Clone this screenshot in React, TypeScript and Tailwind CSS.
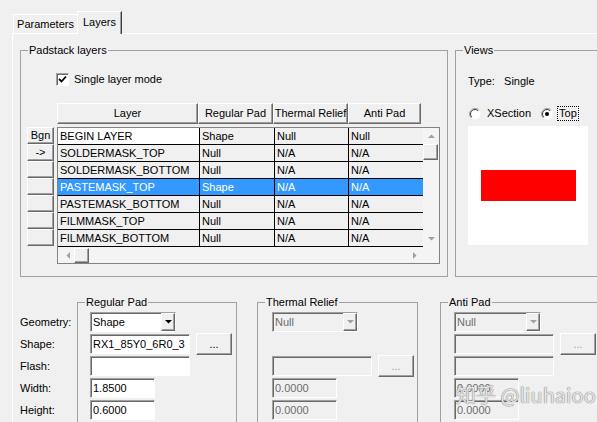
import type { ReactNode } from "react"

const raised =
  "border border-t-white border-l-white border-r-[#696969] border-b-[#696969] shadow-[inset_-1px_-1px_0_#a0a0a0]"
const sunken =
  "border border-t-[#a0a0a0] border-l-[#a0a0a0] border-r-white border-b-white shadow-[inset_1px_1px_0_#696969]"

const ROWS = [
  ["BEGIN LAYER", "Shape", "Null", "Null"],
  ["SOLDERMASK_TOP", "Null", "N/A", "N/A"],
  ["SOLDERMASK_BOTTOM", "Null", "N/A", "N/A"],
  ["PASTEMASK_TOP", "Shape", "N/A", "N/A"],
  ["PASTEMASK_BOTTOM", "Null", "N/A", "N/A"],
  ["FILMMASK_TOP", "Null", "N/A", "N/A"],
  ["FILMMASK_BOTTOM", "Null", "N/A", "N/A"],
]
const ROW_BUTTONS = ["Bgn", "->", "", "", "", "", ""]
const COL_W = ["w-[142px] border-r", "w-[75px] border-r", "w-[74px] border-r", "w-[74px]"]

function Group({ label, className, children }: { label: string; className: string; children?: ReactNode }) {
  return (
    <fieldset className={`shrink-0 border border-[#a0a0a0] ${className}`}>
      <legend className="ml-[7px] px-[1px] leading-[13px]">{label}</legend>
      {children}
    </fieldset>
  )
}

function Arrow({ dir, color = "#000" }: { dir: "up" | "down" | "left" | "right"; color?: string }) {
  const pts = {
    up: "0,4 7,4 3.5,0.5",
    down: "0,0 7,0 3.5,3.5",
    left: "4,0 4,7 0.5,3.5",
    right: "0,0 0,7 3.5,3.5",
  }[dir]
  const vert = dir === "up" || dir === "down"
  return (
    <svg width={vert ? 7 : 4} height={vert ? 4 : 7} viewBox={vert ? "0 0 7 4" : "0 0 4 7"}>
      <polygon points={pts} fill={color} />
    </svg>
  )
}

function Combo({ value, w, disabled }: { value: string; w: string; disabled?: boolean }) {
  return (
    <div className={`flex h-[20px] ${w} ${sunken} ${disabled ? "bg-[#f0f0f0] text-[#6d6d6d]" : "bg-white"}`}>
      <span className="flex flex-1 items-center pl-[2px]">{value}</span>
      <span className={`flex w-[14px] items-center justify-center bg-[#f0f0f0] ${raised}`}>
        <Arrow dir="down" color={disabled ? "#a0a0a0" : "#000"} />
      </span>
    </div>
  )
}

function Field({ value = "", w, disabled }: { value?: string; w: string; disabled?: boolean }) {
  return (
    <div
      className={`flex h-[20px] items-center pl-[2px] ${w} ${sunken} ${
        disabled ? "bg-[#f0f0f0] text-[#6d6d6d]" : "bg-white"
      }`}
    >
      {value}
    </div>
  )
}

function Dots({ disabled }: { disabled?: boolean }) {
  return (
    <div
      className={`ml-[6px] flex h-[22px] w-[36px] items-center justify-center bg-[#f0f0f0] ${raised} ${
        disabled ? "text-[#a0a0a0]" : ""
      }`}
    >
      ...
    </div>
  )
}

function Radio({ checked }: { checked?: boolean }) {
  return (
    <svg width="12" height="12" viewBox="0 0 12 12">
      <circle cx="6" cy="6" r="5.5" fill="#fff" />
      <path d="M9.9 2.1 A5.5 5.5 0 0 0 2.1 9.9" fill="none" stroke="#a0a0a0" />
      <path d="M9.2 2.8 A4.5 4.5 0 0 0 2.8 9.2" fill="none" stroke="#404040" />
      {checked && <circle cx="6" cy="6" r="2" fill="#000" />}
    </svg>
  )
}

export default function App() {
  return (
    <div className="relative h-[422px] w-[597px] overflow-hidden bg-[#f0f0f0] font-['Liberation_Sans',Arial,sans-serif] text-[11px] leading-[13px] text-black">
      {/* tabs */}
      <div className="flex h-[33px] items-end pl-[13px]">
        <div className="flex h-[19px] w-[64px] items-center justify-center border-t border-l border-white">
          Parameters
        </div>
        <div className="relative z-10 -mb-px flex h-[23px] w-[45px] items-center justify-center border-t border-l border-r border-t-white border-l-white border-r-[#404040] bg-[#f0f0f0] pb-[2px] shadow-[inset_-1px_0_0_#a0a0a0]">
          Layers
        </div>
      </div>

      <div className="ml-[12px] h-[389px] border-t border-l border-white">
        {/* top section */}
        <div className="flex pt-[10px] pl-[7px]">
          <Group label="Padstack layers" className="h-[233px] w-[428px]">
            <div className="mt-[16px] ml-[35px] flex items-center gap-[5px]">
              <span className={`flex h-[13px] w-[13px] items-center justify-center bg-white ${sunken}`}>
                <svg width="9" height="9" viewBox="0 0 9 9">
                  <polyline points="1,4 3.5,6.5 8,1.5" fill="none" stroke="#000" strokeWidth="1.8" />
                </svg>
              </span>
              <span>Single layer mode</span>
            </div>

            <div className="mt-[17px] ml-[36px] flex h-[21px]">
              {[
                ["Layer", "w-[141px]"],
                ["Regular Pad", "w-[75px]"],
                ["Thermal Relief", "w-[75px]"],
                ["Anti Pad", "w-[73px]"],
              ].map(([t, w]) => (
                <div key={t} className={`flex items-center justify-center bg-[#f0f0f0] ${w} ${raised}`}>
                  {t}
                </div>
              ))}
            </div>

            <div className="mt-[3px] ml-[6px] flex gap-[3px]">
              <div className="flex w-[27px] flex-col">
                {ROW_BUTTONS.map((t, i) => (
                  <div key={i} className={`flex h-[17px] items-center justify-center ${raised}`}>
                    {t}
                  </div>
                ))}
              </div>

              <div className="h-[137px] w-[383px] border border-[#828282]">
                <div className="flex">
                  <div className="w-[365px]">
                    {ROWS.map((r, i) => {
                      const sel = i === 3
                      return (
                        <div
                          key={i}
                          className={`flex h-[17px] border-b border-black ${
                            sel ? "bg-[#3399ff] text-white" : "bg-[#f0f0f0]"
                          }`}
                        >
                          {r.map((c, j) => (
                            <div
                              key={j}
                              className={`flex items-center border-black pl-[2px] ${COL_W[j]} ${
                                i === 0 && j === 0 ? "bg-white" : ""
                              }`}
                            >
                              {c}
                            </div>
                          ))}
                        </div>
                      )
                    })}
                  </div>
                  <div className="flex h-[119px] w-[16px] flex-col bg-[#f4f4f4]">
                    <div className="flex h-[16px] items-center justify-center pl-[1px]">
                      <Arrow dir="up" color="#a0a0a0" />
                    </div>
                    <div className={`h-[16px] w-[15px] bg-[#f0f0f0] ${raised}`} />
                    <div className="flex-1" />
                    <div className="flex h-[16px] items-center justify-center pl-[1px]">
                      <Arrow dir="down" color="#a0a0a0" />
                    </div>
                  </div>
                </div>
                <div className="flex h-[16px] items-center bg-[#f4f4f4]">
                  <div className="flex w-[16px] items-center justify-center pl-[3px]">
                    <Arrow dir="left" color="#a0a0a0" />
                  </div>
                  <div className={`h-[15px] w-[15px] bg-[#f0f0f0] ${raised}`} />
                  <div className="flex-1" />
                  <div className="flex w-[16px] items-center justify-center">
                    <Arrow dir="right" color="#a0a0a0" />
                  </div>
                  <div className="w-[16px]" />
                </div>
              </div>
            </div>
          </Group>

          <Group label="Views" className="ml-[7px] h-[233px] w-[150px]">
            <div className="mt-[18px] ml-[12px]">
              Type:&nbsp;&nbsp;&nbsp;Single
            </div>
            <div className="mt-[18px] ml-[13px] flex items-center">
              <Radio />
              <span className="ml-[6px]">XSection</span>
              <span className="ml-[10px]">
                <Radio checked />
              </span>
              <span className="ml-[4px] border border-dotted border-black px-[1px]">Top</span>
            </div>
            <div className="mt-[5px] ml-[12px] flex h-[119px] w-[120px] items-center justify-center bg-white">
              <div className="h-[31px] w-[95px] bg-[#ff0000]" />
            </div>
          </Group>
        </div>

        {/* bottom section */}
        <div className="mt-[19px] flex pl-[7px]">
          <div className="flex w-[57px] shrink-0 flex-col pt-[15px]">
            {["Geometry:", "Shape:", "Flash:", "Width:", "Height:"].map((t) => (
              <div key={t} className="flex h-[22px] items-center">
                {t}
              </div>
            ))}
          </div>

          <Group label="Regular Pad" className="h-[140px] w-[160px]">
            <div className="mt-[2px] flex flex-col pl-[12px]">
              <div className="flex h-[22px] items-center">
                <Combo value="Shape" w="w-[86px]" />
              </div>
              <div className="flex h-[22px] items-center">
                <Field value="RX1_85Y0_6R0_3" w="w-[100px]" />
                <Dots />
              </div>
              <div className="flex h-[22px] items-center">
                <Field w="w-[100px]" />
              </div>
              <div className="flex h-[22px] items-center">
                <Field value="1.8500" w="w-[65px]" />
              </div>
              <div className="flex h-[22px] items-center">
                <Field value="0.6000" w="w-[65px]" />
              </div>
            </div>
          </Group>

          <Group label="Thermal Relief" className="ml-[20px] h-[140px] w-[161px]">
            <div className="mt-[2px] flex flex-col pl-[14px]">
              <div className="flex h-[22px] items-center">
                <Combo value="Null" w="w-[86px]" disabled />
              </div>
              <div className="h-[22px]" />
              <div className="flex h-[22px] items-center">
                <Field w="w-[100px]" disabled />
                <Dots disabled />
              </div>
              <div className="flex h-[22px] items-center">
                <Field value="0.0000" w="w-[65px]" disabled />
              </div>
              <div className="flex h-[22px] items-center">
                <Field value="0.0000" w="w-[65px]" disabled />
              </div>
            </div>
          </Group>

          <Group label="Anti Pad" className="ml-[22px] h-[140px] w-[160px]">
            <div className="mt-[2px] flex flex-col pl-[13px]">
              <div className="flex h-[22px] items-center">
                <Combo value="Null" w="w-[87px]" disabled />
              </div>
              <div className="flex h-[22px] items-center">
                <Field w="w-[100px]" disabled />
                <Dots disabled />
              </div>
              <div className="flex h-[22px] items-center">
                <Field w="w-[100px]" disabled />
              </div>
              <div className="flex h-[22px] items-center">
                <Field value="0.0000" w="w-[65px]" disabled />
              </div>
              <div className="flex h-[22px] items-center">
                <Field value="0.0000" w="w-[65px]" disabled />
              </div>
            </div>
          </Group>
        </div>
      </div>

      {/* watermark */}
      <div className="pointer-events-none absolute top-[383px] left-[456px] font-['Noto_Sans_CJK_SC',sans-serif] text-[20px] leading-[24px] text-white/80 [text-shadow:0_0_1px_#777,0_0_1px_#777]">
        知乎 @liuhaioo
      </div>
    </div>
  )
}
